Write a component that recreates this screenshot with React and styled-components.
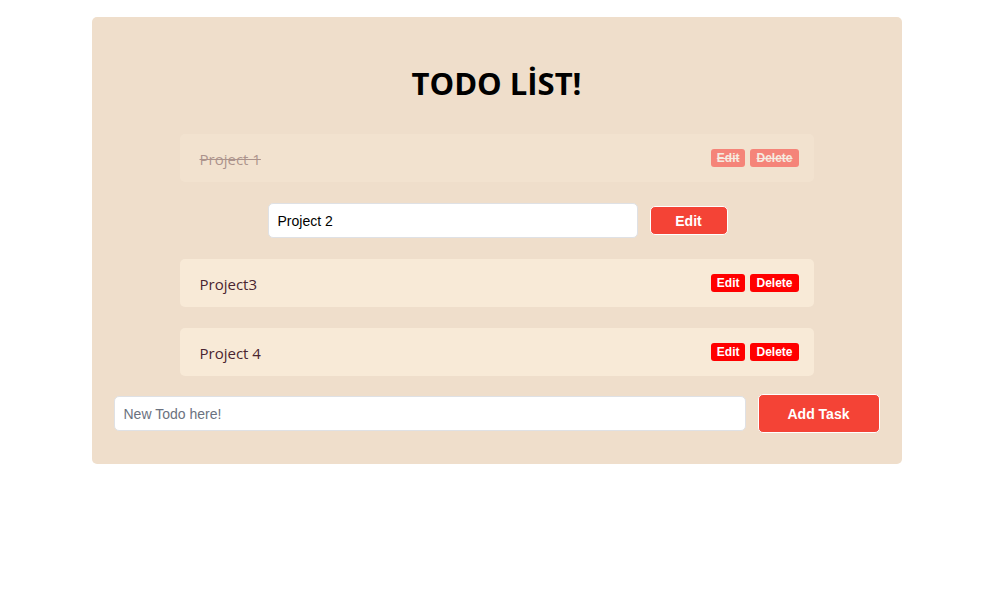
import React, { useState } from 'react';
import styled, { createGlobalStyle } from 'styled-components';

const GlobalStyle = createGlobalStyle`
  body {
    margin: 0;
    background: #fff;
    font-family: "Open Sans", "Noto Sans", sans-serif;
  }
`;

const Page = styled.div`
  display: flex;
  justify-content: center;
  padding: 17px 0 0 6px;
`;

const Card = styled.div`
  width: 810px;
  box-sizing: border-box;
  background-color: #efdecb;
  border-radius: 5px;
  padding: 44px 22px 31px;
  display: flex;
  flex-direction: column;
  align-items: center;
`;

const Title = styled.h1`
  margin: 0 0 29px;
  font-family: "Open Sans", "Noto Sans", sans-serif;
  font-size: 31px;
  font-weight: 700;
  color: #000;
  line-height: 44px;
`;

const List = styled.div`
  display: flex;
  flex-direction: column;
  align-items: center;
  gap: 21px;
  width: 100%;
`;

const Row = styled.div`
  width: 634px;
  height: 48px;
  box-sizing: border-box;
  display: flex;
  align-items: center;
  justify-content: space-between;
  padding: 0 15px 0 20px;
  background-color: #f8ead7;
  border-radius: 5px;
  opacity: ${p => (p.$done ? 0.4 : 1)};
`;

const TaskText = styled.span`
  font-family: "Open Sans", "Noto Sans", sans-serif;
  font-size: 15px;
  color: #4a2530;
  text-decoration: ${p => (p.$done ? 'line-through' : 'none')};
  padding-top: 2px;
`;

const Actions = styled.div`
  display: flex;
  gap: 5px;
`;

const SmallButton = styled.button`
  background-color: #ff0000;
  color: #fff;
  border: none;
  border-radius: 3px;
  height: 18px;
  padding: 0 6px;
  font-family: "Liberation Sans", Arial, sans-serif;
  font-weight: 700;
  font-size: 12px;
  text-decoration: ${p => (p.$done ? 'line-through' : 'none')};
  cursor: pointer;
`;

const EditRow = styled.div`
  display: flex;
  align-items: center;
  gap: 12px;
  height: 35px;
  margin-left: 2px;
`;

const TextInput = styled.input`
  box-sizing: border-box;
  width: ${p => p.$width};
  height: 35px;
  background: #fff;
  border: 1px solid #dfe1e5;
  border-radius: 5px;
  padding: 0 9px;
  font-family: "Liberation Sans", Arial, sans-serif;
  font-size: 14px;
  color: #000;
  outline: none;

  &::placeholder {
    color: #6b7280;
  }
`;

const RedButton = styled.button`
  box-sizing: border-box;
  width: ${p => p.$width};
  height: ${p => p.$height};
  background-color: #f44336;
  color: #fff;
  border: 1px solid #fff;
  border-radius: 5px;
  font-family: "Liberation Sans", Arial, sans-serif;
  font-weight: 700;
  font-size: 14px;
  cursor: pointer;
`;

const AddRow = styled.div`
  display: flex;
  align-items: center;
  gap: 12px;
  width: 100%;
  margin-top: 18px;
`;

const initialTodos = [
  { id: 1, text: 'Project 1', done: true },
  { id: 2, text: 'Project 2', done: false, editing: true },
  { id: 3, text: 'Project3', done: false },
  { id: 4, text: 'Project 4', done: false },
];

export default function App() {
  const [todos] = useState(initialTodos);
  const [newTodo, setNewTodo] = useState('');

  return (
    <Page>
      <GlobalStyle />
      <Card>
        <Title>TODO LİST!</Title>
        <List>
          {todos.map(todo =>
            todo.editing ? (
              <EditRow key={todo.id}>
                <TextInput $width="370px" defaultValue={todo.text} />
                <RedButton $width="78px" $height="29px">Edit</RedButton>
              </EditRow>
            ) : (
              <Row key={todo.id} $done={todo.done}>
                <TaskText $done={todo.done}>{todo.text}</TaskText>
                <Actions>
                  <SmallButton $done={todo.done}>Edit</SmallButton>
                  <SmallButton $done={todo.done}>Delete</SmallButton>
                </Actions>
              </Row>
            )
          )}
        </List>
        <AddRow>
          <TextInput
            $width="632px"
            placeholder="New Todo here!"
            value={newTodo}
            onChange={e => setNewTodo(e.target.value)}
          />
          <RedButton $width="122px" $height="39px">Add Task</RedButton>
        </AddRow>
      </Card>
    </Page>
  );
}
